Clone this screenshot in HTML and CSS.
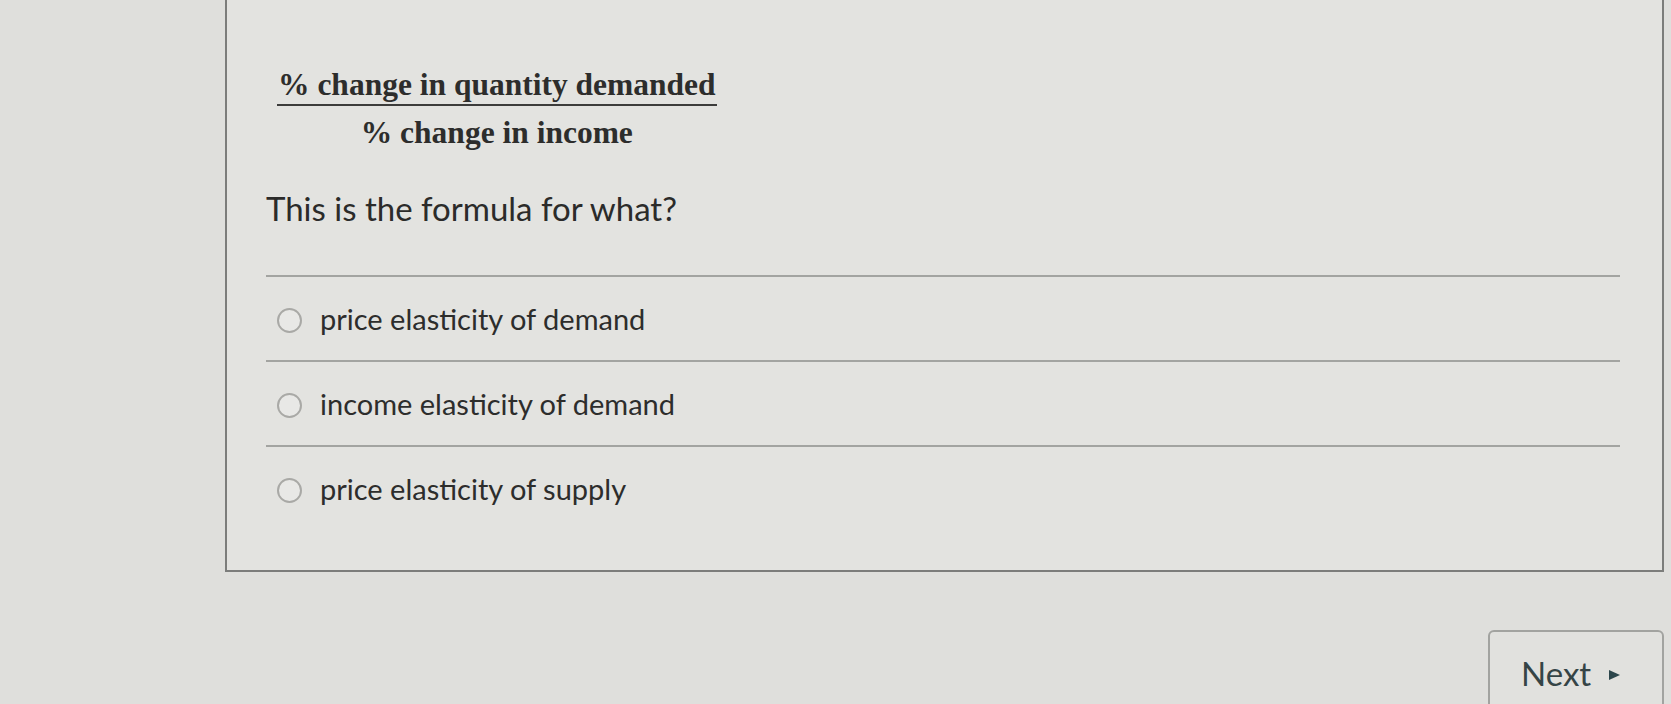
FILE: index.html
```html
<!DOCTYPE html>
<html>
<head>
    <title>Question</title>
    <meta charset="UTF-8">
    <link rel="stylesheet" href="styles.css">
</head>
<body>
    <div class="page">
        <div class="question-card">
            <div class="formula">
                <div class="numerator">% change in quantity demanded</div>
                <div class="denominator">% change in income</div>
            </div>
            <p class="prompt">This is the formula for what?</p>

            <ul class="choices">
                <li class="choice">
                    <span class="radio"></span>
                    <span class="choice-text">price elasticity of demand</span>
                </li>
                <li class="choice">
                    <span class="radio"></span>
                    <span class="choice-text">income elasticity of demand</span>
                </li>
                <li class="choice">
                    <span class="radio"></span>
                    <span class="choice-text">price elasticity of supply</span>
                </li>
            </ul>
        </div>

        <div class="nav-row">
            <button class="btn-next">
                <span>Next</span>
                <svg class="arrow" width="11" height="10" viewBox="0 0 11 10"><path d="M0 0 L11 5 L0 10 Z" fill="#2d474c"/></svg>
            </button>
        </div>
    </div>
</body>
</html>
```

FILE: styles.css
```css
html, body {
    margin: 0;
    padding: 0;
    background-color: #dfdfdc;
    overflow: hidden;
}
.page {
    width: 1439px;
    margin-left: 225px;
}
.question-card {
    border: 2px solid #7c7d7b;
    border-top: none;
    background-color: #e3e3e0;
    padding: 66px 42px 40px 39px;
}
.formula {
    display: inline-block;
    margin-left: 11px;
    font-family: "Liberation Serif", "DejaVu Serif", serif;
    font-weight: bold;
    font-size: 31.5px;
    color: #2d2d2c;
    text-align: center;
}
.numerator {
    line-height: 38px;
    padding: 0 1px;
    border-bottom: 2px solid #3c3c3b;
}
.denominator {
    line-height: 38px;
    padding-top: 8px;
}
.prompt {
    margin: 36px 0 0 0;
    font-family: Lato, "Open Sans", sans-serif;
    font-size: 33px;
    line-height: 40px;
    color: #2b2b2a;
}
.choices {
    list-style: none;
    margin: 47px 0 0;
    padding: 0;
    border-top: 2px solid #a3a4a1;
}
.choice {
    display: flex;
    align-items: center;
    gap: 18px;
    height: 83px;
    padding-left: 11px;
    border-bottom: 2px solid #a3a4a1;
    font-family: Lato, "Open Sans", sans-serif;
    font-size: 29px;
    color: #2d2d2c;
}
.choice:last-child {
    border-bottom: none;
}
.radio {
    width: 21px;
    height: 21px;
    margin-top: 4px;
    border: 2px solid #a9a9a6;
    border-radius: 50%;
    background-color: #e8e8e6;
    flex-shrink: 0;
}
.nav-row {
    display: flex;
    justify-content: flex-end;
    margin-top: 58px;
}
.btn-next {
    display: flex;
    align-items: flex-start;
    gap: 18px;
    width: 176px;
    height: 92px;
    padding: 21px 0 0 31px;
    border: 2px solid #a2a3a0;
    border-radius: 6px;
    background-color: #e1e1de;
    font-family: Lato, "Open Sans", sans-serif;
    font-size: 33px;
    line-height: 40px;
    color: #354446;
    cursor: pointer;
}
.btn-next .arrow {
    margin-top: 17px;
}
```
